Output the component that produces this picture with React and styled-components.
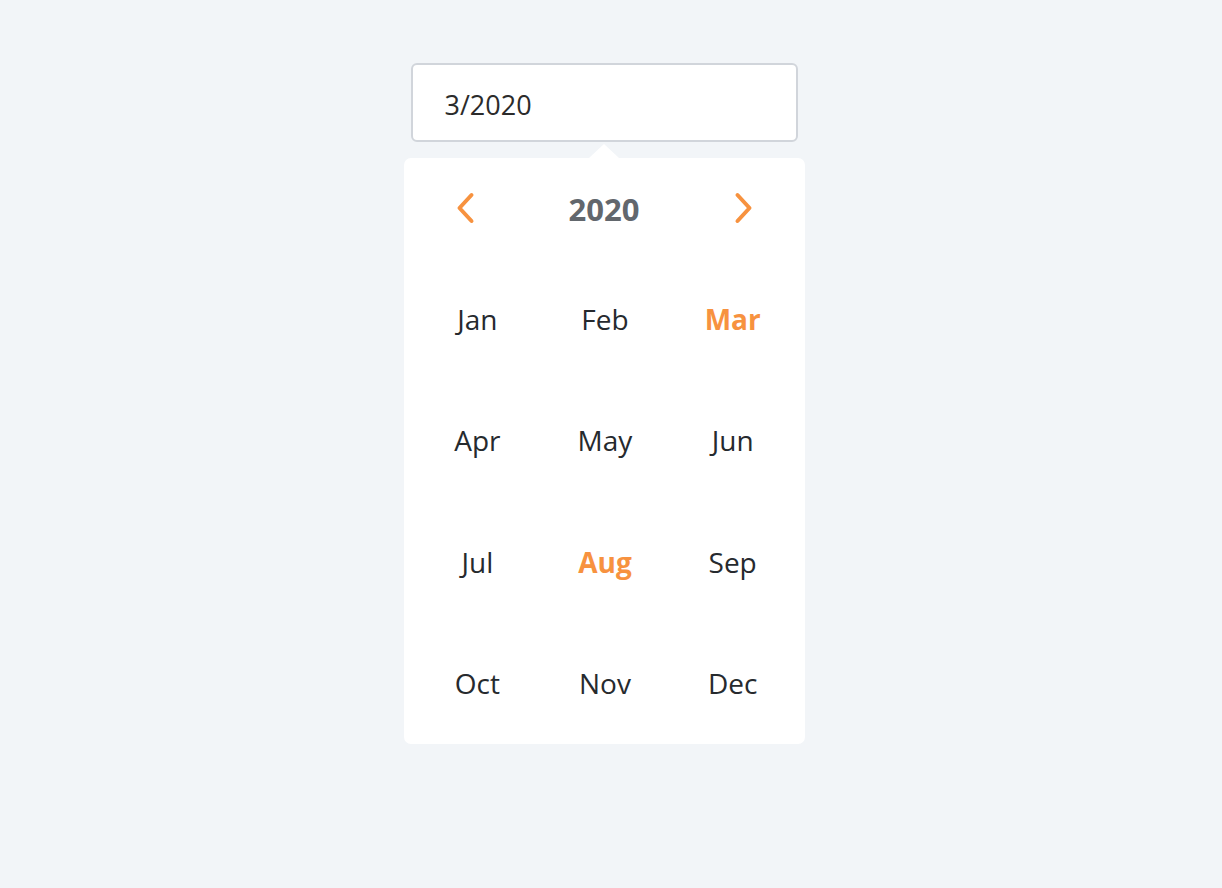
import React, { useState } from 'react';
import styled, { createGlobalStyle } from 'styled-components';

const GlobalStyle = createGlobalStyle`
  html, body {
    margin: 0;
    padding: 0;
    background: #f2f5f8;
    font-family: "Segoe UI", "Open Sans", "Noto Sans", sans-serif;
  }
`;

const Page = styled.div`
  min-height: 888px;
  display: flex;
  flex-direction: column;
  align-items: center;
  padding: 63px 14px 0 0;
  box-sizing: border-box;
`;

const Picker = styled.div`
  width: 401px;
  display: flex;
  flex-direction: column;
  align-items: center;
`;

const Field = styled.input`
  width: 387px;
  height: 79px;
  box-sizing: border-box;
  border: 2px solid #d1d5db;
  border-radius: 6px;
  background: #fff;
  padding: 3px 32px 0;
  font-family: inherit;
  font-size: 27px;
  color: #2b2b2b;
  outline: none;
`;

const Popup = styled.div`
  position: relative;
  margin-top: 16px;
  width: 401px;
  box-sizing: border-box;
  background: #fff;
  border-radius: 7px;
  padding: 0 8px 0 10px;

  &::before {
    content: '';
    position: absolute;
    top: -14px;
    left: 185px;
    border-left: 15px solid transparent;
    border-right: 15px solid transparent;
    border-bottom: 14px solid #fff;
  }
`;

const Header = styled.div`
  height: 100px;
  display: flex;
  align-items: center;
  justify-content: space-between;
  padding: 0 41px 0 39px;
`;

const NavButton = styled.button`
  border: none;
  background: none;
  padding: 0;
  width: 24px;
  height: 36px;
  display: flex;
  align-items: center;
  justify-content: center;
  cursor: pointer;
  color: #f7923f;
`;

const Year = styled.div`
  font-size: 31px;
  font-weight: 700;
  color: #62676d;
  padding-top: 1px;
`;

const Grid = styled.div`
  display: grid;
  grid-template-columns: repeat(3, 1fr);
  grid-auto-rows: 121.5px;
`;

const Month = styled.div`
  display: flex;
  align-items: center;
  justify-content: center;
  font-size: 28px;
  font-weight: ${(p) => (p.$active ? 700 : 400)};
  color: ${(p) => (p.$active ? '#f7923f' : '#262a2e')};
  cursor: pointer;
`;

const Chevron = ({ dir }) => (
  <svg width="20" height="34" viewBox="0 0 20 34" fill="none" stroke="currentColor" strokeWidth="4" strokeLinecap="round" strokeLinejoin="round">
    {dir === 'left' ? <path d="M16.5 4 L4.5 17 L16.5 30" /> : <path d="M3.5 4 L15.5 17 L3.5 30" />}
  </svg>
);

const MONTHS = ['Jan', 'Feb', 'Mar', 'Apr', 'May', 'Jun', 'Jul', 'Aug', 'Sep', 'Oct', 'Nov', 'Dec'];

export default function App() {
  const [year, setYear] = useState(2020);
  const highlighted = [2, 7];

  return (
    <Page>
      <GlobalStyle />
      <Picker>
        <Field value="3/2020" readOnly />
        <Popup>
          <Header>
            <NavButton onClick={() => setYear(year - 1)}>
              <Chevron dir="left" />
            </NavButton>
            <Year>{year}</Year>
            <NavButton onClick={() => setYear(year + 1)}>
              <Chevron dir="right" />
            </NavButton>
          </Header>
          <Grid>
            {MONTHS.map((m, i) => (
              <Month key={m} $active={highlighted.includes(i)}>{m}</Month>
            ))}
          </Grid>
        </Popup>
      </Picker>
    </Page>
  );
}
